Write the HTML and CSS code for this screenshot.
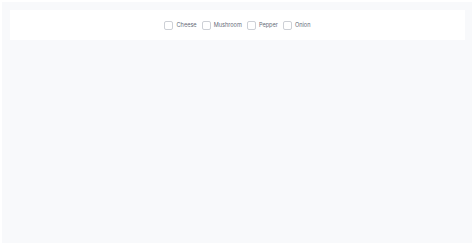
FILE: index.html
```html
<!DOCTYPE html>
<html>
<head>
<meta charset="utf-8">
<link rel="stylesheet" href="styles.css">
</head>
<body>
<div class="panel">
  <div class="card">
    <label class="opt"><span class="box"></span><span class="txt">Cheese</span></label>
    <label class="opt"><span class="box"></span><span class="txt">Mushroom</span></label>
    <label class="opt"><span class="box"></span><span class="txt">Pepper</span></label>
    <label class="opt"><span class="box"></span><span class="txt">Onion</span></label>
  </div>
</div>
</body>
</html>
```
FILE: styles.css
```css
html, body { margin: 0; padding: 0; background: #ffffff; }
body { padding: 2px 2px 5px 2px; font-family: Inter, "Noto Sans", sans-serif; }
.panel {
  background: #f8f9fb;
  height: 241px;
  box-sizing: border-box;
  padding: 8px 7px 0 8px;
}
.card {
  background: #ffffff;
  height: 30px;
  display: flex;
  align-items: center;
  justify-content: center;
  gap: 5px;
}
.opt { display: flex; align-items: center; gap: 3px; height: 9px; }
.box {
  width: 9px; height: 9px;
  border: 1px solid #cdd0d6;
  border-radius: 2px;
  background: #fff;
  box-sizing: border-box;
}
.txt { font-size: 5.6px; color: #666b78; line-height: 9px; display: block; }
```
